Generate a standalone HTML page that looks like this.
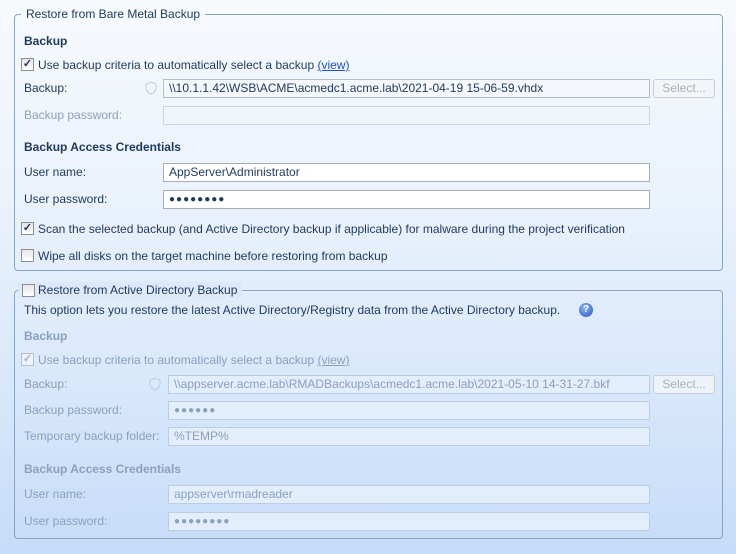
<!DOCTYPE html>
<html><head><meta charset="utf-8"><style>
*{margin:0;padding:0;box-sizing:border-box}
body{width:736px;height:554px;overflow:hidden;position:relative;font-family:"Liberation Sans",sans-serif;font-size:12px;color:#1e395b;background:linear-gradient(#f7fafd 0px,#eaf2fc 200px,#d9e8fb 380px,#c6dcf8 554px)}
.a{position:absolute;white-space:nowrap;line-height:16px}
.b{font-weight:bold}
.g{position:absolute;border:1px solid #8aa4c4;border-radius:4px}
.lg{position:absolute;line-height:16px;padding:0 5px;white-space:nowrap}
.in{position:absolute;height:19px;border:1px solid #abadb3;background:#fff;line-height:17px;padding-left:5px;white-space:nowrap;overflow:hidden}
.in.ro{background:#f4f7fb;border-color:#b8bcc4}
.in.ds{background:#e3eefc;border-color:#bccde2;color:#8aa0bd}
.in.de{background:#f1f6fd;border-color:#ccd6e2}
.btn{position:absolute;height:19px;border:1px solid #c9ced6;border-radius:3px;background:#f3f5f8;color:#a9b1bc;text-align:center;line-height:17px}
.cb{position:absolute;width:13px;height:13px;border:1px solid #8e8f8f;background:linear-gradient(#e6e6e6,#fff);font-size:11px;line-height:11px;text-align:center;color:#222b70;font-weight:bold}
.d{color:#8aa0bd}
.cb.dd{border-color:#b6c2d2;color:#a8b6c8;background:#edf3fb}
u{color:#1a4fc7}
.d u{color:#8aa0bd}
</style></head><body>
<div class="g" style="left:14px;top:14px;width:709px;height:257px"></div>
<div class="lg" style="left:21px;top:6px;background:#f7fafd">Restore from Bare Metal Backup</div>
<div class="a b" style="left:24px;top:33px">Backup</div>
<div class="cb" style="left:21px;top:58px">✓</div>
<div class="a" style="left:38px;top:57px">Use backup criteria to automatically select a backup <u>(view)</u></div>
<div class="a" style="left:24px;top:80px">Backup:</div>
<svg style="position:absolute;left:145px;top:81px" width="12" height="14" viewBox="0 0 12 14"><path d="M6 1 L11 3 V7 C11 10 8.5 12 6 13 C3.5 12 1 10 1 7 V3 Z" fill="none" stroke="#c5ccd5"/></svg>
<div class="in ro" style="left:163px;top:79px;width:487px">\\10.1.1.42\WSB\ACME\acmedc1.acme.lab\2021-04-19 15-06-59.vhdx</div>
<div class="btn" style="left:653px;top:79px;width:62px">Select...</div>
<div class="a d" style="left:24px;top:107px">Backup password:</div>
<div class="in de" style="left:163px;top:106px;width:487px"></div>
<div class="a b" style="left:24px;top:139px">Backup Access Credentials</div>
<div class="a" style="left:24px;top:164px">User name:</div>
<div class="in" style="left:163px;top:163px;width:487px">AppServer\Administrator</div>
<div class="a" style="left:24px;top:191px">User password:</div>
<div class="in" style="left:163px;top:190px;width:487px;font-size:10px;letter-spacing:1px">●●●●●●●●</div>
<div class="cb" style="left:21px;top:222px">✓</div>
<div class="a" style="left:38px;top:221px">Scan the selected backup (and Active Directory backup if applicable) for malware during the project verification</div>
<div class="cb" style="left:21px;top:249px"></div>
<div class="a" style="left:38px;top:248px">Wipe all disks on the target machine before restoring from backup</div>

<div class="g" style="left:14px;top:290px;width:709px;height:249px"></div>
<div class="lg" style="left:18px;top:282px;padding-left:20px;background:#dde9fa">Restore from Active Directory Backup</div>
<div class="cb" style="left:22px;top:284px"></div>
<div class="a" style="left:24px;top:302px">This option lets you restore the latest Active Directory/Registry data from the Active Directory backup.</div>
<div style="position:absolute;left:579px;top:303px;width:14px;height:14px;border-radius:50%;background:radial-gradient(circle at 40% 35%,#8fb3f0,#2456c2);color:#fff;font-size:10px;font-weight:bold;text-align:center;line-height:14px">?</div>
<div class="a b d" style="left:24px;top:328px">Backup</div>
<div class="cb dd" style="left:21px;top:353px">✓</div>
<div class="a d" style="left:38px;top:352px">Use backup criteria to automatically select a backup <u>(view)</u></div>
<div class="a d" style="left:24px;top:376px">Backup:</div>
<svg style="position:absolute;left:149px;top:377px" width="12" height="14" viewBox="0 0 12 14"><path d="M6 1 L11 3 V7 C11 10 8.5 12 6 13 C3.5 12 1 10 1 7 V3 Z" fill="none" stroke="#bccde2"/></svg>
<div class="in ds" style="left:168px;top:375px;width:482px">\\appserver.acme.lab\RMADBackups\acmedc1.acme.lab\2021-05-10 14-31-27.bkf</div>
<div class="btn" style="left:653px;top:375px;width:62px;background:#eef3f9">Select...</div>
<div class="a d" style="left:24px;top:402px">Backup password:</div>
<div class="in ds" style="left:168px;top:401px;width:482px;font-size:10px;letter-spacing:1px">●●●●●●</div>
<div class="a d" style="left:24px;top:428px">Temporary backup folder:</div>
<div class="in ds" style="left:168px;top:427px;width:482px">%TEMP%</div>
<div class="a b d" style="left:24px;top:461px">Backup Access Credentials</div>
<div class="a d" style="left:24px;top:486px">User name:</div>
<div class="in ds" style="left:168px;top:485px;width:482px">appserver\rmadreader</div>
<div class="a d" style="left:24px;top:513px">User password:</div>
<div class="in ds" style="left:168px;top:512px;width:482px;font-size:10px;letter-spacing:1px">●●●●●●●●</div>
</body></html>
